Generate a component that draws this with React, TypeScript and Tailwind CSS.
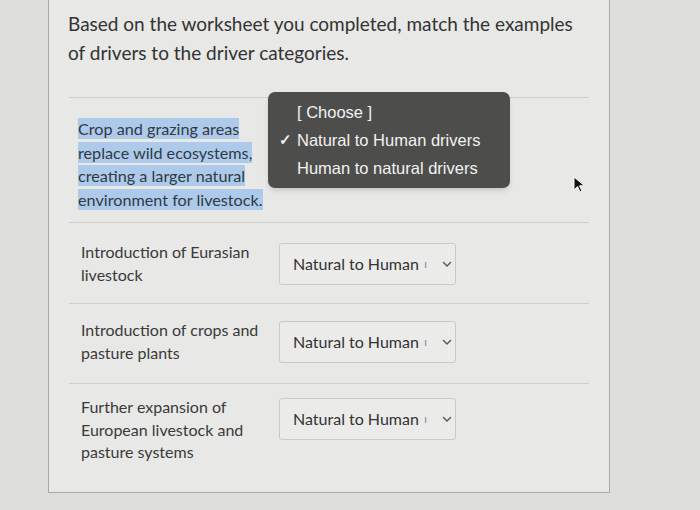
import React from 'react';

const rows = [
  { id: 2, text: ['Introduction of Eurasian', 'livestock'], h: 'h-[81px] pt-[18px]' },
  { id: 3, text: ['Introduction of crops and', 'pasture plants'], h: 'h-[80px] pt-[15px]' },
  { id: 4, text: ['Further expansion of', 'European livestock and', 'pasture systems'], h: 'h-[110px] pt-[12px]' },
];

const Chevron = () => (
  <svg width="10" height="7" viewBox="0 0 10 7" className="text-[#555]">
    <path d="M1.5 1.5 L5 5 L8.5 1.5" fill="none" stroke="currentColor" strokeWidth="1.4" strokeLinecap="round" />
  </svg>
);

const SelectBox: React.FC<{ value: string }> = ({ value }) => (
  <div className="w-[177px] h-[42px] border border-[#c9c9c7] bg-[#ebebe9] rounded-[3px] flex items-center pl-[13px] pr-[3px]">
    <span className="flex-1 whitespace-nowrap text-[16px] text-[#333]">{value}</span>
    <span className="text-[#888] text-[11px] mr-[15px]">ı</span>
    <Chevron />
  </div>
);

const App: React.FC = () => {
  return (
    <div className="w-[700px] h-[510px] bg-[#dededc] overflow-hidden font-['Lato',sans-serif] text-[#333]">
      <div className="relative ml-[48px] w-[562px] h-[493px] bg-[#e8e8e6] border-x border-b border-[#a9a9a7]">
        {/* Question */}
        <div className="pl-[19px] pt-[9px] pb-[30px] text-[19px] leading-[29px] text-[#333]">
          <p>Based on the worksheet you completed, match the examples</p>
          <p>of drivers to the driver categories.</p>
        </div>

        <div className="ml-[20px] mr-[20px] border-t border-[#cfcfcd]">
          {/* Row 1 - selected text, menu open */}
          <div className="h-[125px] flex pt-[19px] pl-[9px] border-b border-[#cfcfcd]">
            <div className="w-[200px] text-[16.2px] leading-[23.5px] text-[#2f3a44]">
              <span className="bg-[#aecaea] [box-decoration-break:clone] py-[1px]">
                Crop and grazing areas<br />
                replace wild ecosystems,<br />
                creating a larger natural<br />
                environment for livestock.
              </span>
            </div>
          </div>

          {rows.map((r) => (
            <div key={r.id} className={`${r.h} flex items-start pl-[12px] border-b border-[#cfcfcd] last:border-b-0`}>
              <div className="w-[199px] text-[16px] leading-[22.5px] text-[#3a3a3a]">
                {r.text.map((t) => (
                  <div key={t}>{t}</div>
                ))}
              </div>
              <div className="pt-[2px] -ml-[1px]">
                <SelectBox value="Natural to Human" />
              </div>
            </div>
          ))}
        </div>

        {/* Open dropdown menu */}
        <div className="absolute left-[219px] top-[92px] w-[242px] rounded-[7px] bg-[#4d4d4c] py-[6px] font-['Liberation_Sans',sans-serif] text-[16.5px] leading-[28px] text-[#f2f2f2] shadow-md">
          <div className="pl-[29px]">[ Choose ]</div>
          <div className="flex">
            <span className="w-[29px] pl-[11px] text-[15px] font-bold">✓</span>
            <span>Natural to Human drivers</span>
          </div>
          <div className="pl-[29px]">Human to natural drivers</div>
        </div>

        {/* Mouse cursor */}
        <svg className="absolute left-[524px] top-[176px]" width="14" height="18" viewBox="0 0 14 18">
          <path d="M1 1 L1 14 L4.5 10.5 L7 16 L9 15 L6.5 9.8 L11.5 9.8 Z" fill="#111" stroke="#fff" strokeWidth="1" />
        </svg>
      </div>
    </div>
  );
};

export default App;
